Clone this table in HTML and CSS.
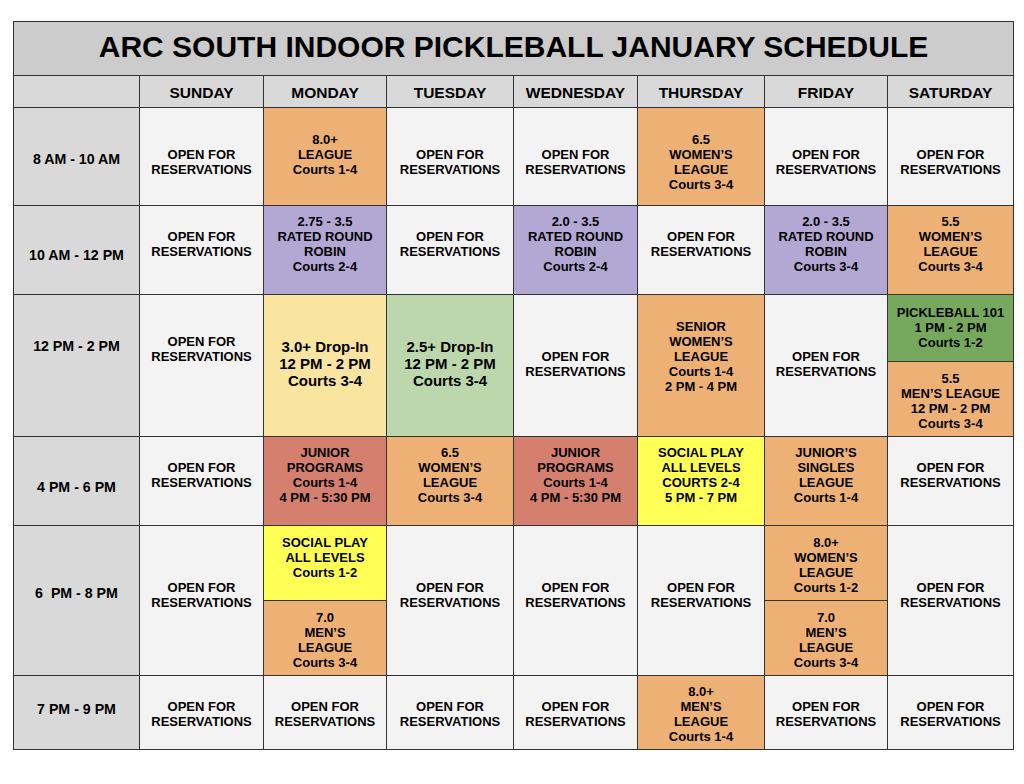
FILE: index.html
```html
<!DOCTYPE html>
<html lang="en">
<head>
<meta charset="utf-8">
<title>ARC South Indoor Pickleball January Schedule</title>
<link rel="stylesheet" href="styles.css">
</head>
<body>
<div class="schedule">
  <div class="cell title span-all">ARC SOUTH INDOOR PICKLEBALL JANUARY SCHEDULE</div>

  <div class="cell head"></div>
  <div class="cell head">SUNDAY</div>
  <div class="cell head">MONDAY</div>
  <div class="cell head">TUESDAY</div>
  <div class="cell head">WEDNESDAY</div>
  <div class="cell head">THURSDAY</div>
  <div class="cell head">FRIDAY</div>
  <div class="cell head">SATURDAY</div>

  <!-- 8 AM - 10 AM -->
  <div class="cell time s2">8 AM - 10 AM</div>
  <div class="cell open s5">OPEN FOR<br>RESERVATIONS</div>
  <div class="cell orange s-2">8.0+<br>LEAGUE<br>Courts 1-4</div>
  <div class="cell open s5">OPEN FOR<br>RESERVATIONS</div>
  <div class="cell open s5">OPEN FOR<br>RESERVATIONS</div>
  <div class="cell orange s5">6.5<br>WOMEN’S<br>LEAGUE<br>Courts 3-4</div>
  <div class="cell open s5">OPEN FOR<br>RESERVATIONS</div>
  <div class="cell open s5">OPEN FOR<br>RESERVATIONS</div>

  <!-- 10 AM - 12 PM -->
  <div class="cell time s5">10 AM - 12 PM</div>
  <div class="cell open s-6">OPEN FOR<br>RESERVATIONS</div>
  <div class="cell purple s-6">2.75 - 3.5<br>RATED ROUND<br>ROBIN<br>Courts 2-4</div>
  <div class="cell open s-6">OPEN FOR<br>RESERVATIONS</div>
  <div class="cell purple s-6">2.0 - 3.5<br>RATED ROUND<br>ROBIN<br>Courts 2-4</div>
  <div class="cell open s-6">OPEN FOR<br>RESERVATIONS</div>
  <div class="cell purple s-6">2.0 - 3.5<br>RATED ROUND<br>ROBIN<br>Courts 3-4</div>
  <div class="cell orange s-6">5.5<br>WOMEN’S<br>LEAGUE<br>Courts 3-4</div>

  <!-- 12 PM - 2 PM -->
  <div class="cell time span2 raised">12 PM - 2 PM</div>
  <div class="cell open span2 raised-open">OPEN FOR<br>RESERVATIONS</div>
  <div class="cell light-yellow span2 big s-1">3.0+ Drop-In<br>12 PM - 2 PM<br>Courts 3-4</div>
  <div class="cell light-green span2 big s-1">2.5+ Drop-In<br>12 PM - 2 PM<br>Courts 3-4</div>
  <div class="cell open span2 s-2">OPEN FOR<br>RESERVATIONS</div>
  <div class="cell orange span2 s-9">SENIOR<br>WOMEN’S<br>LEAGUE<br>Courts 1-4<br>2 PM - 4 PM</div>
  <div class="cell open span2 s-2">OPEN FOR<br>RESERVATIONS</div>
  <div class="cell green s-1">PICKLEBALL 101<br>1 PM - 2 PM<br>Courts 1-2</div>
  <div class="cell orange s2">5.5<br>MEN’S LEAGUE<br>12 PM - 2 PM<br>Courts 3-4</div>

  <!-- 4 PM - 6 PM -->
  <div class="cell time s6">4 PM - 6 PM</div>
  <div class="cell open s-6">OPEN FOR<br>RESERVATIONS</div>
  <div class="cell red s-6">JUNIOR<br>PROGRAMS<br>Courts 1-4<br>4 PM - 5:30 PM</div>
  <div class="cell orange s-6">6.5<br>WOMEN’S<br>LEAGUE<br>Courts 3-4</div>
  <div class="cell red s-6">JUNIOR<br>PROGRAMS<br>Courts 1-4<br>4 PM - 5:30 PM</div>
  <div class="cell yellow s-6">SOCIAL PLAY<br>ALL LEVELS<br>COURTS 2-4<br>5 PM - 7 PM</div>
  <div class="cell orange s-6">JUNIOR’S<br>SINGLES<br>LEAGUE<br>Courts 1-4</div>
  <div class="cell open s-6">OPEN FOR<br>RESERVATIONS</div>

  <!-- 6 PM - 8 PM -->
  <div class="cell time span2 s-8">6&nbsp; PM - 8 PM</div>
  <div class="cell open span2 s-6">OPEN FOR<br>RESERVATIONS</div>
  <div class="cell yellow s-6">SOCIAL PLAY<br>ALL LEVELS<br>Courts 1-2</div>
  <div class="cell open span2 s-6">OPEN FOR<br>RESERVATIONS</div>
  <div class="cell open span2 s-6">OPEN FOR<br>RESERVATIONS</div>
  <div class="cell open span2 s-6">OPEN FOR<br>RESERVATIONS</div>
  <div class="cell orange s2">8.0+<br>WOMEN’S<br>LEAGUE<br>Courts 1-2</div>
  <div class="cell open span2 s-6">OPEN FOR<br>RESERVATIONS</div>
  <div class="cell orange s2">7.0<br>MEN’S<br>LEAGUE<br>Courts 3-4</div>
  <div class="cell orange s2">7.0<br>MEN’S<br>LEAGUE<br>Courts 3-4</div>

  <!-- 7 PM - 9 PM -->
  <div class="cell time s-4">7 PM - 9 PM</div>
  <div class="cell open s1">OPEN FOR<br>RESERVATIONS</div>
  <div class="cell open s1">OPEN FOR<br>RESERVATIONS</div>
  <div class="cell open s1">OPEN FOR<br>RESERVATIONS</div>
  <div class="cell open s1">OPEN FOR<br>RESERVATIONS</div>
  <div class="cell orange s1">8.0+<br>MEN’S<br>LEAGUE<br>Courts 1-4</div>
  <div class="cell open s1">OPEN FOR<br>RESERVATIONS</div>
  <div class="cell open s1">OPEN FOR<br>RESERVATIONS</div>
</div>
</body>
</html>
```

FILE: styles.css
```css
html, body {
  margin: 0;
  padding: 0;
  background: #ffffff;
}

body {
  padding: 21px 0 0 13px;
  font-family: "Liberation Sans", Arial, sans-serif;
  color: #000;
}

.schedule {
  display: grid;
  width: max-content;
  grid-template-columns: 125px 123px 122px 126px 123px 126px 122px 125px;
  grid-template-rows: 53px 31px 97px 88px 66px 74px 88px 74px 74px 73px;
  gap: 1px;
  padding: 1px;
  background: #333333;
}

.cell {
  display: flex;
  align-items: center;
  justify-content: center;
  text-align: center;
  font-weight: bold;
  font-size: 13px;
  line-height: 15px;
  background: #f3f3f3;
  box-sizing: border-box;
}

.span-all { grid-column: 1 / -1; }
.span2 { grid-row: span 2; }

.title {
  background: #cccccc;
  font-size: 30px;
  line-height: 34px;
  padding-bottom: 3px;
}

.head {
  background: #d9d9d9;
  font-size: 15.5px;
  line-height: 18px;
  padding-top: 2px;
}

.time {
  background: #d9d9d9;
  font-size: 14.2px;
  line-height: 16px;
}

/* vertical text offsets within a cell (up = negative) */
.s-9 { padding-bottom: 18px; }
.s-8 { padding-bottom: 16px; }
.s-6 { padding-bottom: 12px; }
.s-4 { padding-bottom: 8px; }
.s-2 { padding-bottom: 4px; }
.s-1 { padding-bottom: 2px; }
.s1 { padding-top: 2px; }
.s2 { padding-top: 4px; }
.s5 { padding-top: 10px; }
.s6 { padding-top: 12px; }
.raised { padding-bottom: 40px; }
.raised-open { padding-bottom: 34px; }

.open { background: #f3f3f3; }
.orange { background: #eeb175; }
.purple { background: #b2a8d4; }
.light-yellow { background: #f9e4a0; }
.light-green { background: #bdd7ac; }
.green { background: #76a95c; }
.red { background: #d5806e; }
.yellow { background: #ffff55; }

.big {
  font-size: 15px;
  line-height: 16.7px;
}
```
